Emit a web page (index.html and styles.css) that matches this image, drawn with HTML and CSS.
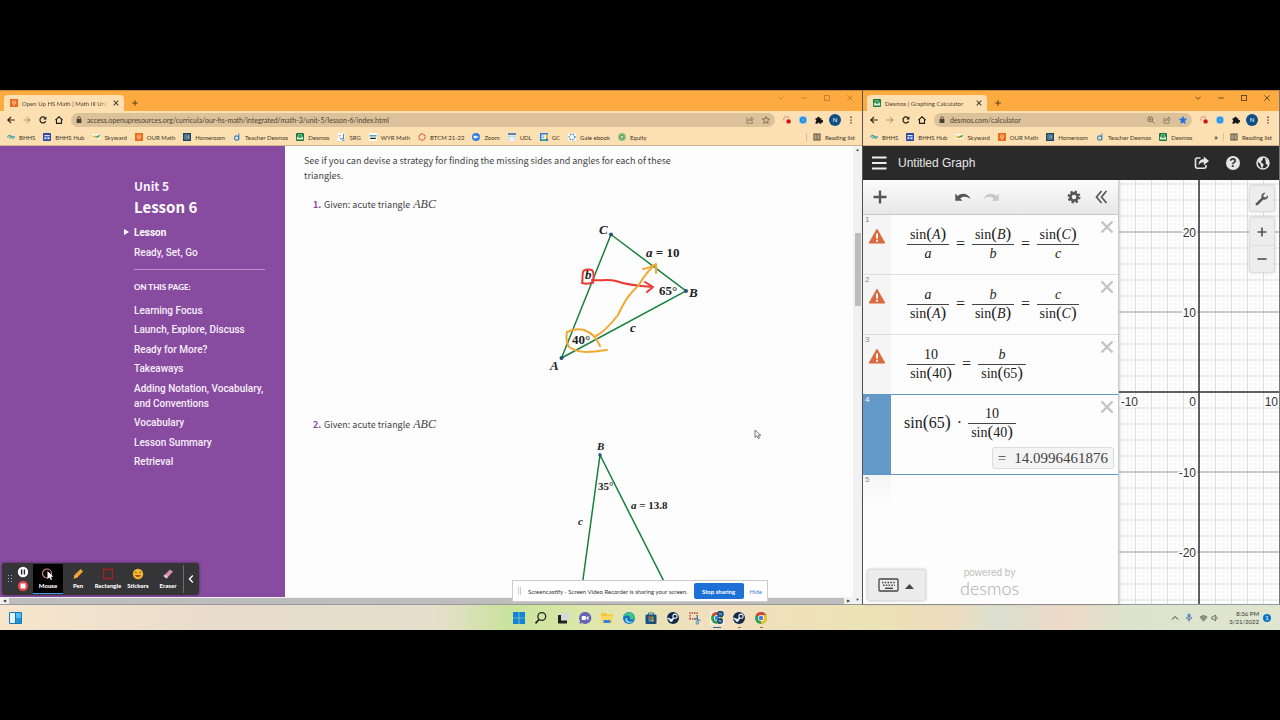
FILE: index.html
```html
<!DOCTYPE html>
<html lang="en">
<head>
<meta charset="utf-8">
<title>Open Up HS Math and Desmos</title>
<link rel="stylesheet" href="styles.css">
</head>
<body>
<svg class="defs" aria-hidden="true">
  <symbol id="i-back" viewBox="0 0 8 8"><path d="M7.6 4H1M4 .8.8 4 4 7.2" fill="none" stroke="currentColor" stroke-width="1.1"/></symbol>
  <symbol id="i-fwd" viewBox="0 0 8 8"><path d="M.4 4H7M4 .8 7.2 4 4 7.2" fill="none" stroke="currentColor" stroke-width=".8"/></symbol>
  <symbol id="i-reload" viewBox="0 0 8 8"><path d="M6.7 5.2A3 3 0 1 1 6.4 2.2" fill="none" stroke="currentColor" stroke-width="1.2"/><path d="M7.4.4v3.1H4.3z" fill="currentColor"/></symbol>
  <symbol id="i-home" viewBox="0 0 8 8"><path d="M.3 4.2 4 .8l3.7 3.4M1.5 3.5v3.9h5V3.5" fill="none" stroke="currentColor" stroke-width="1.1"/></symbol>
  <symbol id="i-lock" viewBox="0 0 6 8"><rect x=".6" y="3" width="4.8" height="4" rx=".5" fill="#4a4132"/><path d="M1.7 3.2V2a1.3 1.3 0 0 1 2.6 0v1.2" fill="none" stroke="#4a4132" stroke-width=".8"/></symbol>
  <symbol id="i-pageshare" viewBox="0 0 8 8"><path d="M2 2.2H.8v5h5.6V5.6M2.3 5.2c.2-1.9 1.4-2.8 3.2-2.8V1l2.1 2-2.1 2V3.7c-1.5 0-2.4.4-3.2 1.5z" fill="none" stroke="#6b5c45" stroke-width=".6"/></symbol>
  <symbol id="i-star" viewBox="0 0 8 8"><path d="M4 .5l1 2.4 2.6.2-2 1.7.6 2.6L4 6 1.8 7.4l.6-2.6-2-1.7L3 2.9z" fill="var(--fill,none)" stroke="var(--line,#5d503d)" stroke-width=".7"/></symbol>
  <symbol id="i-mag" viewBox="0 0 8 8"><circle cx="3.2" cy="3.2" r="2.5" fill="none" stroke="#5d503d" stroke-width=".7"/><path d="M5 5l2.6 2.6M2 3.2h2.4M3.2 2v2.4" stroke="#5d503d" stroke-width=".7"/></symbol>
  <symbol id="i-cast" viewBox="0 0 8 8"><path d="M1 4.4A2.6 2.6 0 0 1 5.8 2.2" fill="none" stroke="#e9868b" stroke-width="1.2" stroke-dasharray="2 .8"/><circle cx="5.6" cy="5.4" r="2.2" fill="#d40f16"/></symbol>
  <symbol id="i-blue" viewBox="0 0 8 8"><rect width="8" height="8" rx="3" fill="#8cc6f2"/><circle cx="4" cy="4" r="3" fill="#1d86dc"/><circle cx="4" cy="4" r="1.3" fill="#64b3ee"/></symbol>
  <symbol id="i-puzzle" viewBox="0 0 8 8"><path d="M.5 2.2h1.8a1.2 1.2 0 1 1 2.3 0h1.8v1.9a1.2 1.2 0 1 1 0 2.2v1.4H4.7a1.2 1.2 0 0 0-2.3 0H.5V5.9a1.1 1.1 0 0 0 0-2.1z" fill="#161616"/></symbol>
  <symbol id="i-dots" viewBox="0 0 8 8"><path d="M3.4.6h1.3v1.3H3.4zM3.4 3.4h1.3v1.3H3.4zM3.4 6.2h1.3v1.3H3.4z" fill="#2e281e"/></symbol>
  <symbol id="i-list" viewBox="0 0 8 8"><rect x=".4" y=".5" width="7.2" height="7" fill="#5c523f"/><path d="M1.4 1.4h1.3v5.2H1.4zM3.5 1.4h1v5.2h-1zM5.3 1.4h1.3v5.2H5.3z" fill="#cfbd9c"/></symbol>
  <symbol id="i-x" viewBox="0 0 8 8"><path d="M1.7 1.7l4.600 4.600M6.300 1.700l-4.600 4.600" stroke="currentColor" stroke-width="1.100"/></symbol>
  <symbol id="i-plus" viewBox="0 0 8 8"><path d="M4 1.2v5.6M1.2 4h5.6" stroke="currentColor" stroke-width=".9"/></symbol>
  <symbol id="w-down" viewBox="0 0 8 8"><path d="M1.5 2.8 4 5.2l2.5-2.4" fill="none" stroke="currentColor" stroke-width=".8"/></symbol>
  <symbol id="w-min" viewBox="0 0 8 8"><path d="M1.3 4h5.4" stroke="currentColor" stroke-width=".8"/></symbol>
  <symbol id="w-max" viewBox="0 0 8 8"><rect x="1.5" y="1.5" width="5" height="5" fill="none" stroke="currentColor" stroke-width=".8"/></symbol>
  <symbol id="w-close" viewBox="0 0 8 8"><path d="M1.3 1.3l5.4 5.4M6.7 1.3 1.3 6.7" stroke="currentColor" stroke-width=".8"/></symbol>
  <symbol id="f-our" viewBox="0 0 8 8"><rect width="8" height="8" fill="#ee6a1c"/><path d="M4 1v6M2.4 2.2v2.2L4 5.6l1.6-1.2V2.2" fill="none" stroke="#fbc89c" stroke-width=".9"/></symbol>
  <symbol id="f-desmos" viewBox="0 0 8 8"><rect width="8" height="8" rx="1" fill="#157a38"/><path d="M2 1.4h4l.4 3H1.6zM.9 4h1l.6 1h3l.6-1h1v2.4H.9z" fill="#d9efdc"/><path d="M2.4 1.800h3.200v2.400H2.400z" fill="#2d9450"/></symbol>
  <symbol id="f-bhhs" viewBox="0 0 8 8"><path d="M.4 4.5c1-2.6 3-2.8 3.6-.8.7 2.5 3 2 3.5-.6M2.5 5.5c.9-2.5 2.6-2.8 4-1.6" fill="none" stroke="#3ea5a8" stroke-width="1.1"/></symbol>
  <symbol id="f-hub" viewBox="0 0 8 8"><rect width="8" height="8" rx=".8" fill="#2b48a5"/><path d="M1.4 2h5.2v1.3H1.4zM1.4 4.2h2v2h-2zM4.4 4.2h2.2v2H4.4z" fill="#e3e8fa"/></symbol>
  <symbol id="f-sky" viewBox="0 0 8 8"><rect y="1" width="8" height="5" fill="#fffaf0"/><path d="M.5 2.5 2 5l1.2-2.3L4.4 5" fill="none" stroke="#e7a322" stroke-width="1"/><path d="M4 5l1.4-2L6.4 4l1.3-2.2" fill="none" stroke="#3c9c4a" stroke-width="1.1"/></symbol>
  <symbol id="f-homeroom" viewBox="0 0 8 8"><rect width="8" height="8" fill="#273f58"/><rect x="2" y="2" width="4" height="4" fill="none" stroke="#71b4cf" stroke-width=".9"/><path d="M3 4h3" stroke="#d9edf5" stroke-width=".8"/></symbol>
  <symbol id="f-td" viewBox="0 0 8 8"><circle cx="3.6" cy="5" r="2.1" fill="none" stroke="#3a86c8" stroke-width="1.1"/><path d="M5.8.5v6.8" stroke="#3a86c8" stroke-width="1.1"/></symbol>
  <symbol id="f-srg" viewBox="0 0 8 8"><rect x=".5" width="7" height="8" fill="#fdfdfd"/><path d="M1.4 2.5h3M1.4 4h2" stroke="#e88e6c" stroke-width=".7"/><path d="M6.5 1v4.8H3M5 7.2h2.5" fill="none" stroke="#2f6fb8" stroke-width=".9"/></symbol>
  <symbol id="f-wyr" viewBox="0 0 8 8"><rect width="8" height="8" fill="#fffdf6"/><path d="M.5 2.8h7" stroke="#38a2c9" stroke-width="1.4"/><path d="M1.2 5.4h5.6" stroke="#222" stroke-width="1.3"/></symbol>
  <symbol id="f-btcm" viewBox="0 0 8 8"><circle cx="4" cy="4" r="3.1" fill="none" stroke="#dd5a33" stroke-width="1.1" stroke-dasharray="2.6 .5"/></symbol>
  <symbol id="f-zoom" viewBox="0 0 8 8"><circle cx="4" cy="4" r="4" fill="#2d7de8"/><path d="M1.7 2.8h3v2.4h-3zM5 3.7l1.3-.8v2.2L5 4.3z" fill="#fff"/></symbol>
  <symbol id="f-udl" viewBox="0 0 8 8"><rect width="8" height="8" fill="#f5f8fb"/><path d="M0 0h8v2H0z" fill="#5a87b7"/><path d="M.3 2.6h2v2h-2zM5.5 2.6h2v2h-2z" fill="#9ad0c8"/><path d="M3 2.6h2v2H3zM.3 5.4h2v2h-2zM5.5 5.4h2v2h-2z" fill="#bcd3ea"/></symbol>
  <symbol id="f-gc" viewBox="0 0 8 8"><rect width="8" height="8" fill="#2d77e0"/><path d="M1.5 1.5H6v5H1.5z" fill="#fff"/><path d="M6 1.5h2v4H6z" fill="#f6be1c"/><path d="M1.5 6.4H6V8H1.5z" fill="#36a556"/><path d="M2.4 3h2M2.4 4.7h2" stroke="#2d77e0" stroke-width=".8"/></symbol>
  <symbol id="f-gale" viewBox="0 0 8 8"><rect width="8" height="8" rx="2" fill="#fffdf6"/><circle cx="4" cy="4" r="2.8" fill="none" stroke="#2f86bd" stroke-width="1.4" stroke-dasharray="1.4 1.3"/></symbol>
  <symbol id="f-equity" viewBox="0 0 8 8"><circle cx="4" cy="4" r="3.9" fill="#8fbf86"/><circle cx="4" cy="4" r="2.1" fill="none" stroke="#4f9651" stroke-width=".9"/><circle cx="4" cy="4" r="1" fill="#dcebc8"/></symbol>
  <symbol id="i-warn" viewBox="0 0 18 16"><path d="M9 1.2 16.8 15H1.2z" fill="#d96b3e" stroke="#d96b3e" stroke-linejoin="round"/><path d="M9 5.6v4.8M9 11.8v2" stroke="#fff" stroke-width="1.9"/></symbol>
  <symbol id="i-del" viewBox="0 0 14 14"><path d="M1.5 1.5l11 11M12.5 1.5l-11 11" stroke="#c4c4c4" stroke-width="2.4"/></symbol>
  <symbol id="i-undo" viewBox="0 0 16 10"><path d="M.3 1.5v7.3h7.2L5.2 6.4c2.8-2.5 6.4-2 10.4.3C12.7 1.4 7 .1 2.7 4z" fill="currentColor"/></symbol>
  <symbol id="i-steam" viewBox="0 0 14 14"><circle cx="7" cy="7" r="6" fill="#14294a"/><circle cx="9" cy="5.2" r="2.1" fill="none" stroke="#e8eef5" stroke-width="1.1"/><path d="M1.4 7.2 5.7 9 8 6.8" fill="none" stroke="#e8eef5" stroke-width="1.7"/><circle cx="5.2" cy="9.3" r="1.6" fill="#e8eef5"/></symbol>
  <symbol id="i-chrome" viewBox="0 0 14 14"><circle cx="7" cy="7" r="6" fill="#2f9e4f"/><path d="M7 7 1.8 4A6 6 0 0 1 12.2 4z" fill="#dd4435"/><path d="M7 7V13a6 6 0 0 0 5.2-9H7z" fill="#f6c32c"/><circle cx="7" cy="7" r="2.9" fill="#fff"/><circle cx="7" cy="7" r="2.2" fill="#3f7fe0"/></symbol>
</svg>

<div class="desktop">
  <div class="windows">
    <section class="window" aria-label="Open Up HS Math">
      <div class="titlebar dim">
        <div class="tab"><svg class="s8"><use href="#f-our"/></svg><span class="tab-title fade">Open Up HS Math | Math III Unit</span><button class="ib" aria-label="Close tab"><svg class="s8"><use href="#i-x"/></svg></button></div>
        <button class="ib newtab" aria-label="New tab"><svg class="s8"><use href="#i-plus"/></svg></button>
        <div class="controls"><button class="ib" aria-label="Search tabs"><svg class="s8"><use href="#w-down"/></svg></button><button class="ib" aria-label="Minimize"><svg class="s8"><use href="#w-min"/></svg></button><button class="ib" aria-label="Maximize"><svg class="s8"><use href="#w-max"/></svg></button><button class="ib" aria-label="Close"><svg class="s8"><use href="#w-close"/></svg></button></div>
      </div>
      <div class="navbar">
        <button class="ib" aria-label="Back"><svg class="s8"><use href="#i-back"/></svg></button>
        <button class="ib faded" aria-label="Forward"><svg class="s8"><use href="#i-fwd"/></svg></button>
        <button class="ib" aria-label="Reload"><svg class="s8"><use href="#i-reload"/></svg></button>
        <button class="ib" aria-label="Home"><svg class="s8"><use href="#i-home"/></svg></button>
        <div class="address"><svg class="lock"><use href="#i-lock"/></svg><input aria-label="Address" value="access.openupresources.org/curricula/our-hs-math/integrated/math-3/unit-5/lesson-6/index.html"><button class="ib" aria-label="Share"><svg class="s8"><use href="#i-pageshare"/></svg></button><button class="ib" aria-label="Bookmark"><svg class="s8"><use href="#i-star"/></svg></button></div>
        <div class="exts"><button class="ib" aria-label="Screencastify"><svg class="s8"><use href="#i-cast"/></svg></button><button class="ib" aria-label="Extension"><svg class="s8"><use href="#i-blue"/></svg></button><button class="ib" aria-label="Extensions"><svg class="s8"><use href="#i-puzzle"/></svg></button><button class="avatar">N</button><button class="ib" aria-label="Menu"><svg class="s8"><use href="#i-dots"/></svg></button></div>
      </div>
      <nav class="bookmarks" aria-label="Bookmarks">
        <a href="#"><svg class="s8"><use href="#f-bhhs"/></svg>BHHS</a>
        <a href="#"><svg class="s8"><use href="#f-hub"/></svg>BHHS Hub</a>
        <a href="#"><svg class="s8"><use href="#f-sky"/></svg>Skyward</a>
        <a href="#"><svg class="s8"><use href="#f-our"/></svg>OUR Math</a>
        <a href="#"><svg class="s8"><use href="#f-homeroom"/></svg>Homeroom</a>
        <a href="#"><svg class="s8"><use href="#f-td"/></svg>Teacher Desmos</a>
        <a href="#"><svg class="s8"><use href="#f-desmos"/></svg>Desmos</a>
        <a href="#"><svg class="s8"><use href="#f-srg"/></svg>SRG</a>
        <a href="#"><svg class="s8"><use href="#f-wyr"/></svg>WYR Math</a>
        <a href="#"><svg class="s8"><use href="#f-btcm"/></svg>BTCM 21-22</a>
        <a href="#"><svg class="s8"><use href="#f-zoom"/></svg>Zoom</a>
        <a href="#"><svg class="s8"><use href="#f-udl"/></svg>UDL</a>
        <a href="#"><svg class="s8"><use href="#f-gc"/></svg>GC</a>
        <a href="#"><svg class="s8"><use href="#f-gale"/></svg>Gale ebook</a>
        <a href="#"><svg class="s8"><use href="#f-equity"/></svg>Equity</a>
        <a class="reading" href="#"><svg class="s8"><use href="#i-list"/></svg>Reading list</a>
      </nav>
      <div class="viewport">
        <div class="lesson">
          <aside class="sidebar">
            <p class="unit">Unit 5</p>
            <h1>Lesson 6</h1>
            <ul class="parts"><li class="current"><a href="#">Lesson</a></li><li><a href="#">Ready, Set, Go</a></li></ul>
            <h2>ON THIS PAGE:</h2>
            <ul class="toc">
              <li><a href="#">Learning Focus</a></li>
              <li><a href="#">Launch, Explore, Discuss</a></li>
              <li><a href="#">Ready for More?</a></li>
              <li><a href="#">Takeaways</a></li>
              <li><a href="#">Adding Notation, Vocabulary, and Conventions</a></li>
              <li><a href="#">Vocabulary</a></li>
              <li><a href="#">Lesson Summary</a></li>
              <li><a href="#">Retrieval</a></li>
            </ul>
          </aside>
          <main class="article">
            <p>See if you can devise a strategy for finding the missing sides and angles for each of these triangles.</p>
            <ol>
              <li><div>Given: acute triangle <i>ABC</i></div>
                <svg class="figure" viewBox="540 215 170 165" width="170" height="165" role="img" aria-label="Triangle with angles 40 and 65 degrees">
                  <path d="M611 235.500 686 292 561.500 359z" fill="none" stroke="#17803f" stroke-width="1.500"/>
                  <g fill="#23517a"><circle cx="611" cy="235.500" r="2"/><circle cx="686" cy="292" r="2"/><circle cx="561.500" cy="359" r="2"/></g>
                  <g class="lab">
                    <text class="v" x="599" y="235">C</text><text class="v" x="689" y="298">B</text><text class="v" x="550" y="371">A</text>
                    <text x="646" y="258"><tspan class="v">a</tspan> = 10</text><text class="v" x="585" y="280">b</text><text class="v" x="630" y="333">c</text>
                    <text x="659" y="296">65°</text><text x="572" y="345">40°</text>
                  </g>
                  <g fill="none" stroke-linecap="round" stroke-linejoin="round" stroke-width="2">
                    <path d="M593 284c1-6 1-11-1-13-3-1-8-1-9 2-1 4 0 8-1 11 3 1 6 1 9 0M592 281c8 1 16-1 24 1 8 3 22 5 37 6M645 283l8 5-6 5" stroke="#ea3a35"/>
                    <path d="M600 347c-4-9-8-13-16-16-8-2-13 0-17 2-1 5-1 10 2 15 9 6 18 6 38 3M596 337c8-4 15-12 22-21 7-15 12-22 21-30 4-8 9-13 15-20M643 270c5-1 9-2 13-5v9" stroke="#f2a82e"/>
                  </g>
                </svg></li>
              <li><div>Given: acute triangle <i>ABC</i></div>
                <svg class="figure" viewBox="540 436 170 165" width="170" height="165" role="img" aria-label="Triangle with a 35 degree angle">
                  <path d="M575 640 600 457 685 625" fill="none" stroke="#17803f" stroke-width="1.500"/>
                  <circle cx="600" cy="457" r="1.700" fill="#23517a"/>
                  <g class="lab small"><text class="v" x="597" y="452">B</text><text x="598" y="492">35°</text><text x="631" y="511"><tspan class="v">a</tspan> = 13.8</text><text class="v" x="578" y="527">c</text></g>
                </svg></li>
            </ol>
          </main>
        </div>
        <div class="vscroll"><span>▲</span><i></i><span>▼</span></div>
        <div class="hscroll"><span>◀</span><i></i><span>▶</span></div>
        <div class="recorder">
          <svg width="6" height="10" viewBox="0 0 6 10"><path d="M1 1h1v1H1zM4 1h1v1H4zM1 4h1v1H1zM4 4h1v1H4zM1 7h1v1H1zM4 7h1v1H4z" fill="#aaa"/></svg>
          <div class="rec-state">
            <button class="ib" aria-label="Pause"><svg width="12" height="12" viewBox="0 0 12 12"><circle cx="6" cy="6" r="5.200" fill="#fff"/><path d="M4.600 3.500v5M7.400 3.500v5" stroke="#222" stroke-width="1.400"/></svg></button>
            <button class="ib" aria-label="Stop"><svg width="12" height="12" viewBox="0 0 12 12"><circle cx="6" cy="6" r="5.200" fill="#d9464b"/><path d="M3.500 3.500h5v5h-5z" fill="#fff"/></svg></button>
          </div>
          <button class="tool on"><svg width="14" height="14" viewBox="0 0 14 14"><circle cx="6" cy="6.500" r="4.500" fill="none" stroke="#dc8f8f" stroke-width="1.100"/><path d="M6.500 4v8l2-1.800 1.300 2.700 1.300-.6L9.800 9.700h2.600z" fill="#fff"/></svg>Mouse</button>
          <button class="tool"><svg width="14" height="14" viewBox="0 0 14 14"><path d="M2.500 12l1-4L9.600 2l2.500 2.400-6 6z" fill="#f0a330"/><path d="M4 8.500l2 2" stroke="#fbd28c"/></svg>Pen</button>
          <button class="tool"><svg width="14" height="14" viewBox="0 0 14 14"><rect x="2.500" y="2.500" width="9" height="9" fill="none" stroke="#a5201f" stroke-width="1.400"/></svg>Rectangle</button>
          <button class="tool"><svg width="14" height="14" viewBox="0 0 14 14"><circle cx="7" cy="7" r="5.200" fill="#f3b72d"/><path d="M3.800 6c.6-1 1.400-1 2 0M8.200 6c.6-1 1.400-1 2 0" fill="none" stroke="#6b4315" stroke-width=".8"/><path d="M4 8c1.500 3 4.500 3 6 0z" fill="#a4491b"/></svg>Stickers</button>
          <button class="tool"><svg width="14" height="14" viewBox="0 0 14 14"><path d="M2.500 9 9 2.500l3 2.300L5.500 11.500z" fill="#d691ab"/><path d="M2.500 9l3 2.500 1.600-1.600-3-2.500z" fill="#efc4d1"/></svg>Eraser</button>
          <button class="collapse" aria-label="Collapse"><svg width="6" height="10" viewBox="0 0 6 10"><path d="M4.800 1.500 1.500 5l3.300 3.500" fill="none" stroke="#fff" stroke-width="1.400"/></svg></button>
        </div>
        <svg class="cursor" width="8" height="11" viewBox="0 0 8 11"><path d="M1 1v7.500l2-1.800 1.300 2.900 1.200-.5-1.200-2.800h2.500z" fill="#fff" stroke="#555" stroke-width=".8"/></svg>
      </div>
    </section>

    <section class="window second" aria-label="Desmos">
      <div class="titlebar">
        <div class="tab"><svg class="s8"><use href="#f-desmos"/></svg><span class="tab-title">Desmos | Graphing Calculator</span><button class="ib" aria-label="Close tab"><svg class="s8"><use href="#i-x"/></svg></button></div>
        <button class="ib newtab" aria-label="New tab"><svg class="s8"><use href="#i-plus"/></svg></button>
        <div class="controls"><button class="ib" aria-label="Search tabs"><svg class="s8"><use href="#w-down"/></svg></button><button class="ib" aria-label="Minimize"><svg class="s8"><use href="#w-min"/></svg></button><button class="ib" aria-label="Maximize"><svg class="s8"><use href="#w-max"/></svg></button><button class="ib" aria-label="Close"><svg class="s8"><use href="#w-close"/></svg></button></div>
      </div>
      <div class="navbar">
        <button class="ib" aria-label="Back"><svg class="s8"><use href="#i-back"/></svg></button>
        <button class="ib faded" aria-label="Forward"><svg class="s8"><use href="#i-fwd"/></svg></button>
        <button class="ib" aria-label="Reload"><svg class="s8"><use href="#i-reload"/></svg></button>
        <button class="ib" aria-label="Home"><svg class="s8"><use href="#i-home"/></svg></button>
        <div class="address"><svg class="lock"><use href="#i-lock"/></svg><input aria-label="Address" value="desmos.com/calculator"><button class="ib" aria-label="Zoom"><svg class="s8"><use href="#i-mag"/></svg></button><button class="ib" aria-label="Share"><svg class="s8"><use href="#i-pageshare"/></svg></button><button class="ib starred" aria-label="Bookmarked"><svg class="s8"><use href="#i-star"/></svg></button></div>
        <div class="exts"><button class="ib" aria-label="Screencastify"><svg class="s8"><use href="#i-cast"/></svg></button><button class="ib" aria-label="Extension"><svg class="s8"><use href="#i-blue"/></svg></button><button class="ib" aria-label="Extensions"><svg class="s8"><use href="#i-puzzle"/></svg></button><button class="avatar">N</button><button class="ib" aria-label="Menu"><svg class="s8"><use href="#i-dots"/></svg></button></div>
      </div>
      <nav class="bookmarks" aria-label="Bookmarks">
        <a href="#"><svg class="s8"><use href="#f-bhhs"/></svg>BHHS</a>
        <a href="#"><svg class="s8"><use href="#f-hub"/></svg>BHHS Hub</a>
        <a href="#"><svg class="s8"><use href="#f-sky"/></svg>Skyward</a>
        <a href="#"><svg class="s8"><use href="#f-our"/></svg>OUR Math</a>
        <a href="#"><svg class="s8"><use href="#f-homeroom"/></svg>Homeroom</a>
        <a href="#"><svg class="s8"><use href="#f-td"/></svg>Teacher Desmos</a>
        <a href="#"><svg class="s8"><use href="#f-desmos"/></svg>Desmos</a>
        <button class="more">»</button>
        <a class="reading" href="#"><svg class="s8"><use href="#i-list"/></svg>Reading list</a>
      </nav>
      <div class="calc">
        <header class="calc-head">
          <button class="ib" aria-label="Menu"><svg width="15" height="14" viewBox="0 0 15 14"><path d="M0 1.500h14.500M0 7h14.500M0 12.500h14.500" stroke="#eee" stroke-width="2"/></svg></button>
          <h1>Untitled Graph</h1>
          <button class="ib" aria-label="Share graph"><svg width="16" height="14" viewBox="0 0 16 14"><path d="M6.500 2H3.300C2 2 1.500 2.700 1.500 3.800v6.500c0 1.200.6 1.900 1.800 1.900h6.900c1.200 0 1.800-.7 1.800-1.900V9" fill="none" stroke="#e6e6e6" stroke-width="1.600"/><path d="M4.600 9.200C4.700 5 6.500 3.400 9.800 3.300V.5L15 5 9.800 9.200V6.300C7.400 6.200 6 7 4.600 9.200z" fill="#e6e6e6"/></svg></button>
          <button class="ib help" aria-label="Help"><span>?</span></button>
          <button class="ib" aria-label="Language"><svg width="14" height="14" viewBox="0 0 14 14"><circle cx="7" cy="7" r="6" fill="none" stroke="#e6e6e6" stroke-width="1.500"/><path d="M2 3.500 5 1.500l2.200.3-.6 2L5 5.400 5.600 7l2 1-.4 2.200L6 12.400 4.800 10 4.500 8 2.200 6.200zM9.400 2.500l3 2.500.3 3.400L11 9 9.500 7 10 5 8.800 4z" fill="#e6e6e6"/></svg></button>
        </header>
        <div class="calc-body">
          <div class="panel">
            <div class="panel-bar">
              <button class="ib" aria-label="Add item"><svg width="14" height="14" viewBox="0 0 14 14"><path d="M7 .5v13M.5 7h13" stroke="#555" stroke-width="2.400"/></svg></button>
              <div class="history"><button class="ib" aria-label="Undo"><svg width="16" height="10"><use href="#i-undo"/></svg></button><button class="ib redo" aria-label="Redo"><svg width="16" height="10"><use href="#i-undo"/></svg></button></div>
              <button class="ib" aria-label="Settings"><svg width="14" height="14" viewBox="0 0 14 14"><circle cx="7" cy="7" r="3.600" fill="none" stroke="#555" stroke-width="2.600"/><circle cx="7" cy="7" r="5.500" fill="none" stroke="#555" stroke-width="2" stroke-dasharray="2.300 2.020"/></svg></button>
              <button class="ib" aria-label="Hide list"><svg width="13" height="14" viewBox="0 0 13 14"><path d="M6.500 1 1.500 7l5 6M11.500 1l-5 6 5 6" fill="none" stroke="#555" stroke-width="1.700"/></svg></button>
            </div>
            <ol class="exprs">
              <li><div class="gutter"><span>1</span><svg width="18" height="16"><use href="#i-warn"/></svg></div>
                <div class="math"><span class="frac"><span>sin<b>(</b><i>A</i><b>)</b></span><span><i>a</i></span></span><span>=</span><span class="frac"><span>sin<b>(</b><i>B</i><b>)</b></span><span><i>b</i></span></span><span>=</span><span class="frac"><span>sin<b>(</b><i>C</i><b>)</b></span><span><i>c</i></span></span></div>
                <button class="ib del" aria-label="Delete"><svg width="14" height="14"><use href="#i-del"/></svg></button></li>
              <li><div class="gutter"><span>2</span><svg width="18" height="16"><use href="#i-warn"/></svg></div>
                <div class="math"><span class="frac"><span><i>a</i></span><span>sin<b>(</b><i>A</i><b>)</b></span></span><span>=</span><span class="frac"><span><i>b</i></span><span>sin<b>(</b><i>B</i><b>)</b></span></span><span>=</span><span class="frac"><span><i>c</i></span><span>sin<b>(</b><i>C</i><b>)</b></span></span></div>
                <button class="ib del" aria-label="Delete"><svg width="14" height="14"><use href="#i-del"/></svg></button></li>
              <li><div class="gutter"><span>3</span><svg width="18" height="16"><use href="#i-warn"/></svg></div>
                <div class="math"><span class="frac wide"><span>10</span><span>sin<b>(</b>40<b>)</b></span></span><span>=</span><span class="frac wide"><span><i>b</i></span><span>sin<b>(</b>65<b>)</b></span></span></div>
                <button class="ib del" aria-label="Delete"><svg width="14" height="14"><use href="#i-del"/></svg></button></li>
              <li class="active"><div class="gutter"><span>4</span></div>
                <div class="math product"><span>sin<b>(</b>65<b>)</b></span><span>·</span><span class="frac wide"><span>10</span><span>sin<b>(</b>40<b>)</b></span></span></div>
                <button class="ib del" aria-label="Delete"><svg width="14" height="14"><use href="#i-del"/></svg></button>
                <output class="result"><span>=</span>14.0996461876</output></li>
              <li class="next"><div class="gutter"><span>5</span></div></li>
            </ol>
            <div class="panel-foot">
              <button class="keypad" aria-label="Show keypad"><svg width="36" height="14" viewBox="0 0 36 14"><rect x="1" y="1" width="19" height="12" rx="1" fill="none" stroke="#444" stroke-width="1.300"/><path d="M4 4.500h13.500M5 7.300h12" stroke="#444" stroke-width="1.500" stroke-dasharray="1.500 1.300"/><path d="M7 10.300h8" stroke="#444" stroke-width="1.400"/><path d="M27 11h9l-4.500-5z" fill="#444"/></svg></button>
              <div class="powered"><small>powered by</small><span>desmos</span></div>
            </div>
          </div>
          <div class="graph">
            <svg viewBox="0 0 160 425" preserveAspectRatio="xMidYMid slice" role="img" aria-label="Graph paper">
              <defs>
                <pattern id="fine" x="0" y="4" width="4" height="4" patternUnits="userSpaceOnUse"><path d="M0 .5h4M.5 0v4" stroke="#f7f7f7" stroke-width="1"/></pattern>
                <pattern id="minor" x="0" y="4" width="16" height="16" patternUnits="userSpaceOnUse"><path d="M0 .5h16M.5 0v16" stroke="#dcdcdc" stroke-width="1"/></pattern>
              </defs>
              <rect width="160" height="425" fill="url(#fine)"/><rect width="160" height="425" fill="url(#minor)"/>
              <path d="M0 52.500h160M0 132.500h160M0 292.500h160M0 372.500h160" stroke="#a6a6a6"/>
              <path d="M0 212.500h160M80 0v425" stroke="#333" stroke-width="1.500"/>
              <g class="ticks"><text x="77" y="57">20</text><text x="77" y="137">10</text><text x="77" y="226">0</text><text x="77" y="297">-10</text><text x="77" y="377">-20</text><text x="19" y="226">-10</text><text x="159" y="226">10</text></g>
            </svg>
            <div class="graph-tools">
              <button aria-label="Graph settings"><svg width="14" height="14" viewBox="0 0 14 14"><path d="M13 3.200 10.700 5.500 8.700 5l-.4-1.900L10.600.8C8.500.2 6.300 1.600 6.400 4.200L6.600 5.800 1 11.200a1.300 1.300 0 0 0 1.900 1.900L8.400 7.500c2.800.9 5.200-1.400 4.600-4.300z" fill="#555"/></svg></button>
              <div><button aria-label="Zoom in"><svg width="10" height="10" viewBox="0 0 10 10"><path d="M5 .5v9M.5 5h9" stroke="#555" stroke-width="1.700"/></svg></button><button aria-label="Zoom out"><svg width="10" height="10" viewBox="0 0 10 10"><path d="M.5 5h9" stroke="#555" stroke-width="1.700"/></svg></button></div>
            </div>
          </div>
        </div>
      </div>
    </section>
    <div class="sharing"><svg width="4" height="8" viewBox="0 0 4 8"><path d="M0 0h1v8H0zM2 0h1v8H2z" fill="#ccc"/></svg><span>Screencastify - Screen Video Recorder is sharing your screen.</span><button>Stop sharing</button><a href="#">Hide</a></div>
  </div>

  <footer class="taskbar">
    <button class="ib" aria-label="Widgets"><svg width="13" height="12" viewBox="0 0 13 12"><rect width="13" height="12" rx="1" fill="#1577b8"/><path d="M1 1h5v10H1z" fill="#e7f6fd"/><path d="M7 1h5v5H7z" fill="#4bc0f2"/><path d="M7 6h5v5H7z" fill="#2192da"/></svg></button>
    <div class="apps">
      <button class="ib" aria-label="Start"><svg viewBox="0 0 14 14"><path d="M1 1h5.700v5.700H1zM7.300 1H13v5.700H7.300zM1 7.300h5.700V13H1zM7.300 7.300H13V13H7.300z" fill="#1283d6"/></svg></button>
      <button class="ib" aria-label="Search"><svg viewBox="0 0 14 14"><circle cx="7.800" cy="5.500" r="3.900" fill="none" stroke="#222" stroke-width="1.300"/><path d="M5 8.500 1.500 12.300" stroke="#222" stroke-width="1.700"/></svg></button>
      <button class="ib" aria-label="Task view"><svg viewBox="0 0 14 14"><rect x="2" y="4" width="9" height="8.500" fill="#222"/><rect x="5" y="2" width="8" height="7.500" fill="#d9d9d9"/></svg></button>
      <button class="ib" aria-label="Chat"><svg viewBox="0 0 14 14"><path d="M7 1a6 6 0 1 1-3 11l-2.600.8.600-2.600A6 6 0 0 1 7 1z" fill="#6464b8"/><path d="M3.800 5h4v4h-4zM8.500 6.300 10.500 5v4L8.500 7.700z" fill="#fff"/></svg></button>
      <button class="ib" aria-label="File Explorer"><svg viewBox="0 0 14 14"><path d="M1 2h5l1 1.500h6V12H1z" fill="#f7c43b"/><path d="M1 5h12v7H1z" fill="#fbd767"/><path d="M3.500 9h7v3h-7z" fill="#2f86d0"/></svg></button>
      <button class="ib" aria-label="Edge"><svg viewBox="0 0 14 14"><circle cx="7" cy="7" r="6" fill="#1670be"/><path d="M1.200 6C2 0 12.500-.3 13 6.500c0 2.500-4 2.500-5 1.200C9 5 5 3 1.200 6z" fill="#3cc58a"/><path d="M5.200 7c-.5 3 2.400 4.600 6 3-2 3.300-8.200 2.600-8-1.500 0-1 .8-1.500 2-1.500z" fill="#7fd5f3"/></svg></button>
      <button class="ib" aria-label="Store"><svg viewBox="0 0 14 14"><path d="M4.500 4V2h5v2" fill="none" stroke="#2c7ca8"/><rect x="1.500" y="3.500" width="11" height="9.500" rx="1.200" fill="#1d4f7d"/><path d="M4.500 5.500h2.200v2.200H4.500z" fill="#ef5c33"/><path d="M7.300 5.500h2.200v2.200H7.300z" fill="#80bb2c"/><path d="M4.500 8.300h2.200v2.200H4.500z" fill="#2fa6ea"/><path d="M7.300 8.300h2.200v2.200H7.300z" fill="#f7b928"/></svg></button>
      <button class="ib" aria-label="Steam"><svg><use href="#i-steam"/></svg></button>
      <button class="ib" aria-label="Snipping Tool"><svg viewBox="0 0 14 14"><path d="M2 8V2h7v6z" fill="none" stroke="#c83c32" stroke-width="1.300" stroke-dasharray="1.500 1"/><path d="M6 7.500l6.500 2M9.500 4v7" stroke="#3586b5" stroke-width="1.100"/><circle cx="9.300" cy="11.800" r="1.300" fill="none" stroke="#3586b5"/></svg></button>
      <button class="ib open focus" aria-label="Chrome, sharing"><svg viewBox="0 0 14 14"><use href="#i-chrome"/><circle cx="10.500" cy="3" r="3.300" fill="#0d4c7a"/><circle cx="10" cy="10" r="3" fill="#0d4c7a"/><path d="M9.600 4.300V1.900l1.800 2.400V1.900M9.200 11.200V8.900l1.600 2.300V8.900" fill="none" stroke="#a9d3ee" stroke-width=".6"/></svg></button>
      <button class="ib open" aria-label="Steam window"><svg><use href="#i-steam"/></svg></button>
      <button class="ib open" aria-label="Chrome"><svg><use href="#i-chrome"/></svg></button>
    </div>
    <div class="tray">
      <svg width="8" height="8" viewBox="0 0 8 8"><path d="M1 5.500 4 2.500l3 3" fill="none" stroke="#333"/></svg>
      <svg width="8" height="9" viewBox="0 0 8 9"><rect x="2.500" y=".5" width="3" height="5" rx="1.500" fill="#4d8fca"/><path d="M1.300 4c.2 3.500 5.200 3.500 5.400 0M4 6.500v2" fill="none" stroke="#4b6178" stroke-width=".8"/></svg>
      <span class="net"><svg width="9" height="8" viewBox="0 0 9 8"><path d="M.5 3.200C3 .6 6 .6 8.500 3.200L4.500 7.500z" fill="#747a68"/><path d="M1.500 4.200c2-1.800 4-1.800 6 0M2.800 5.600c1.200-1 2.200-1 3.400 0" fill="none" stroke="#dfe5cf" stroke-width=".5"/></svg><svg width="8" height="8" viewBox="0 0 8 8"><path d="M.8 2.800h1.500L4.300 1v6L2.300 5.200H.8z" fill="none" stroke="#444" stroke-width=".7"/><path d="M5.500 2.500c.8 1 .8 2 0 3" fill="none" stroke="#444" stroke-width=".7"/></svg></span>
      <time>8:36 PM<br>3/21/2022</time>
      <span class="count">1</span>
    </div>
  </footer>
</div>
</body>
</html>
```

FILE: styles.css
```css
* { box-sizing: border-box; }
html, body { margin: 0; height: 100%; }
body { background: #000; padding: 90px 0; font-family: Lato, "Noto Sans", sans-serif; font-size: 6px; color: #3c3426; }
.defs { position: absolute; width: 0; height: 0; }
button { font: inherit; color: inherit; cursor: pointer; }
h1, h2, p, ul, ol { margin: 0; padding: 0; }
ul, ol { list-style: none; }
a { color: inherit; text-decoration: none; }
svg { display: block; flex: none; }
.s8 { width: 8px; height: 8px; }
.ib { display: block; border: 0; padding: 0; background: none; flex: none; }

.desktop { height: 100%; display: flex; flex-direction: column; }
.windows { flex: 1; min-height: 0; display: grid; grid-template-columns: 862fr 418fr; position: relative; }
.window { display: flex; flex-direction: column; min-width: 0; min-height: 0; background: #fde0b1; border-bottom: 1px solid #999; }
.second { border-left: 1px solid #5a5348; border-right: 1px solid #777; }

/* Browser chrome */
.titlebar { display: flex; align-items: flex-end; height: 21px; padding: 1px 8px 0 4px; background: #fdab41; border-top: 1px solid #c58a3b; flex: none; }
.tab { display: flex; align-items: center; gap: 4px; width: 120px; height: 16px; padding: 0 4px 0 6px; background: #fde0b1; border-radius: 4px 4px 0 0; color: #4e4432; }
.tab-title { flex: 1; white-space: nowrap; overflow: hidden; }
.fade { mask-image: linear-gradient(90deg, #000 90%, transparent); }
.newtab { margin: 0 0 4px 7px; color: #4a3514; }
.controls { display: flex; gap: 15px; margin: 0 0 9px auto; color: #4a3514; }
.dim .controls { color: #b47a2e; }
.navbar { display: flex; align-items: center; gap: 8px; height: 18px; padding: 0 7px; color: #1f1b14; flex: none; }
.faded { color: #8b7b60; }
.address { flex: 1; display: flex; align-items: center; gap: 8px; height: 14px; padding: 0 5px; border-radius: 7px; background: #dcc29b; }
.lock { width: 6px; height: 8px; }
.address input { flex: 1; min-width: 0; border: 0; padding: 0; margin-left: -3px; background: none; font: 7px Lato, sans-serif; color: #4d4231; outline: 0; }
.starred { --fill: #1b72e0; --line: #1b72e0; }
.exts { display: flex; align-items: center; gap: 8px; }
.avatar { width: 12px; height: 12px; margin: 0 -2px; padding: 0; border: 0; border-radius: 50%; background: #0d4f86; color: #fff; line-height: 12px; }
.bookmarks { display: flex; align-items: center; gap: 8px; height: 17px; padding: 0 7px; white-space: nowrap; border-bottom: 1px solid #cdb48c; flex: none; }
.bookmarks a { display: flex; align-items: center; gap: 4px; }
.bookmarks .reading { margin-left: auto; padding-left: 6px; border-left: 1px solid #d8bf94; }
.more { border: 0; padding: 0; margin-left: auto; background: none; font-weight: 700; font-size: 8px; line-height: 8px; }
.bookmarks .more + .reading { margin-left: -3px; }

/* Lesson page */
.viewport { flex: 1; min-height: 0; display: grid; grid-template: minmax(0, 1fr) 7px / minmax(0, 1fr) 9px; position: relative; background: #fdfdfd; }
.lesson { display: grid; grid-template-columns: 285px 1fr; overflow: hidden; }
.sidebar { background: #874b9f; color: #f8effb; padding: 32px 20px 0 134px; font: 500 10px/15px Roboto, sans-serif; }
.unit { font: 700 12px/16px "Noto Sans CJK SC", sans-serif; }
.sidebar h1 { font: 700 15px/24px "Noto Sans CJK SC", sans-serif; margin: 1px 0 6px; color: #fff; }
.parts { display: grid; gap: 5px; padding-bottom: 9px; border-bottom: 1px solid #b994c8; }
.current { font-weight: 700; position: relative; color: #fff; }
.current::before { content: ""; position: absolute; left: -10px; top: 4px; border-left: 5px solid #fff; border-top: 3px solid transparent; border-bottom: 3px solid transparent; }
.sidebar h2 { font: 900 8px/14px Lato, sans-serif; margin: 10px 0 9px; }
.toc { display: flex; flex-direction: column; justify-content: space-between; min-height: 166px; }
.article { padding: 7px 170px 0 19px; font: 9px/15px "Noto Sans CJK SC", sans-serif; color: #444; }
.article ol { counter-reset: q; margin-top: 14px; }
.article li { counter-increment: q; display: grid; grid-template-columns: 20px 1fr; margin-bottom: 38px; }
.article li::before { content: counter(q) "."; font-weight: 700; color: #874b9f; padding-left: 9px; }
.article i { font: italic 12px/15px "Liberation Serif", serif; margin-left: 1px; }
.figure { grid-column: 2; margin: 2px 0 0 216px; }
.lab { font: 700 13px "Liberation Serif", serif; fill: #222; }
.lab .v { font-style: italic; }
.small { font-size: 11px; }
.vscroll { grid-row: 1 / 3; grid-column: 2; display: flex; flex-direction: column; justify-content: space-between; position: relative; background: #f1f1f1; font-size: 4px; line-height: 8px; text-align: center; }
.vscroll i { position: absolute; left: 2px; right: 1px; top: 19%; height: 16%; background: #bdbdbd; }
.hscroll { grid-row: 2; grid-column: 1; display: flex; align-items: center; background: #f1f1f1; font-size: 4px; text-align: center; }
.hscroll span { width: 9px; }
.hscroll i { flex: 1; height: 6px; background: #bdbdbd; }
.cursor { position: absolute; left: 754px; top: 283px; }

/* Screen recorder overlays */
.recorder { position: absolute; left: 2px; bottom: 9px; display: flex; align-items: center; height: 32px; padding-left: 5px; border-radius: 3px; background: #353436; color: #fff; box-shadow: 0 0 3px rgba(0, 0, 0, .5); font: 900 6px/8px Lato, sans-serif; }
.rec-state { display: grid; gap: 2px; margin: 0 4px 0 4px; }
.tool { width: 30px; height: 30px; padding: 3px 0 0; border: 0; background: none; display: flex; flex-direction: column; align-items: center; gap: 1px; }
.on { background: #000; border-bottom: 1px solid #3aa2e6; }
.collapse { height: 28px; padding: 0 5px 0 4px; border: 0; border-left: 1px solid #6b6a6c; background: none; }
.sharing { position: absolute; left: 0; right: 0; bottom: 3px; width: fit-content; margin: 0 auto; height: 22px; display: flex; align-items: center; gap: 6px; padding: 0 5px; background: #fff; border: 1px solid #ccc; color: #333; white-space: nowrap; }
.sharing button { height: 16px; width: 50px; border: 0; border-radius: 2px; padding: 0; background: #1d70d6; color: #fff; font-weight: 700; }
.sharing a { color: #3d7fd9; }

/* Graphing calculator */
.calc { flex: 1; min-height: 0; display: flex; flex-direction: column; font-family: "Liberation Sans", Arial, sans-serif; background: #fff; }
.calc-head { display: flex; align-items: center; gap: 16px; height: 34px; padding: 0 9px; background: #2a2a2a; color: #e6e6e6; flex: none; }
.calc-head h1 { flex: 1; margin-left: -5px; font-size: 12px; font-weight: 400; }
.help span { display: block; width: 14px; height: 14px; border-radius: 50%; background: #e6e6e6; color: #2a2a2a; font: 700 12px/14px "Liberation Sans", sans-serif; }
.calc-body { flex: 1; min-height: 0; display: grid; grid-template-columns: 256px 1fr; }
.panel { display: flex; flex-direction: column; min-height: 0; background: #fdfdfd; border-right: 1px solid #ccc; box-shadow: 1px 0 3px rgba(0, 0, 0, .2); position: relative; }
.panel-bar { display: flex; align-items: center; gap: 14px; height: 35px; padding: 0 10px; border-bottom: 1px solid #c9c9c9; background: linear-gradient(#fcfcfc, #e7e7e7); flex: none; }
.history { display: flex; gap: 12px; margin: 0 auto; color: #555; }
.redo { color: #c8c8c8; transform: scaleX(-1); }
.exprs { flex: 1; min-height: 0; }
.exprs li { display: grid; grid-template-columns: 28px 1fr 14px; min-height: 60px; padding-right: 4px; border-bottom: 1px solid #dedede; }
.gutter { background: #f5f5f5; color: #888; font-size: 8px; line-height: 10px; padding-left: 2px; }
.gutter svg { margin: 3px 0 0 3px; }
.math { display: flex; align-items: center; gap: 7px; padding: 0 0 1px 16px; font: 16px/16px "Liberation Serif", serif; color: #222; }
.math b { font-size: 18px; font-weight: 400; line-height: 14px; }
.frac { display: grid; text-align: center; font-size: 14px; line-height: 15px; }
.frac b { font-size: 17px; }
.frac > span { min-width: 42px; height: 17px; }
.wide > span { min-width: 48px; }
.frac > span + span { border-top: 1px solid #444; padding-top: 1px; }
.del { align-self: start; margin-top: 5px; }
.exprs .active { grid-template-rows: 51px 28px; border: 1px solid #6399c8; border-width: 1px 0; margin-top: -1px; }
.active .gutter { grid-row: 1 / 3; background: #6399c8; color: #fff; }
.product { padding: 4px 0 0 13px; gap: 6px; }
.result { grid-column: 2 / 4; justify-self: end; align-self: start; height: 22px; padding: 0 5px; border: 1px solid #dcdcdc; border-radius: 3px; background: #f4f4f4; font: 15px/20px "Liberation Serif", serif; color: #444; margin-top: 1px; }
.result span { margin-right: 8px; }
.exprs .next { min-height: 34px; border: 0; }
.next .gutter { background: linear-gradient(#f5f5f5, #fdfdfd); }
.panel-foot { display: flex; align-items: flex-end; gap: 34px; padding: 0 0 3px 4px; }
.keypad { width: 59px; height: 32px; padding: 0 6px 0 10px; border: 1px solid #ddd; border-radius: 3px; background: #ececec; box-shadow: 0 0 3px rgba(0, 0, 0, .2); }
.powered { display: grid; justify-items: center; color: #bdbdbd; padding-bottom: 3px; }
.powered small { font-size: 10px; line-height: 11px; }
.powered span { font: 300 18px/20px Lato, sans-serif; color: #aaa; }
.graph { position: relative; min-width: 0; min-height: 0; overflow: hidden; }
.graph > svg { width: 100%; height: 100%; }
.ticks { font-size: 12px; fill: #333; text-anchor: end; stroke: #fff; stroke-width: 3px; paint-order: stroke; }
.graph-tools { position: absolute; top: 5px; right: 4px; display: grid; gap: 5px; }
.graph-tools > button, .graph-tools > div { background: #ededed; border: 1px solid #ddd; border-radius: 3px; box-shadow: 0 0 3px rgba(0, 0, 0, .15); }
.graph-tools button { display: grid; place-items: center; width: 26px; height: 27px; padding: 0; }
.graph-tools div button { width: 24px; height: 27px; border: 0; background: none; }
.graph-tools div button + button { border-top: 1px solid #ddd; }

/* Taskbar */
.taskbar { display: grid; grid-template-columns: 1fr auto 1fr; align-items: center; height: 25px; flex: none; padding: 0 9px; background: linear-gradient(90deg, #f7e6cc, #e8dccc 17%, #e6dfcc 34%, #c9e39b 40%, #dfe7ab 46%, #f2dfc0 56%, #ebe3b5 68%, #eedcbe 74%, #dbe0d0 78%, #eed9c8 83%, #dde4cc 88%, #dfe5cf); color: #333; }
.taskbar > .ib { justify-self: start; }
.apps { display: flex; gap: 8px; }
.apps svg { width: 14px; height: 14px; }
.open { position: relative; }
.open::after { content: ""; position: absolute; left: 6px; bottom: -3px; width: 3px; height: 1px; background: #777; }
.focus { background: rgba(255, 255, 255, .5); }
.focus::after { left: 3px; width: 8px; background: #1b6fa5; }
.tray { display: flex; align-items: center; justify-content: flex-end; gap: 6px; }
.net { display: flex; gap: 3px; }
.tray time { text-align: right; line-height: 8px; margin-left: 4px; }
.count { width: 8px; height: 8px; margin-left: -2px; border-radius: 50%; background: #0a74c9; color: #fff; text-align: center; line-height: 8px; }
```
